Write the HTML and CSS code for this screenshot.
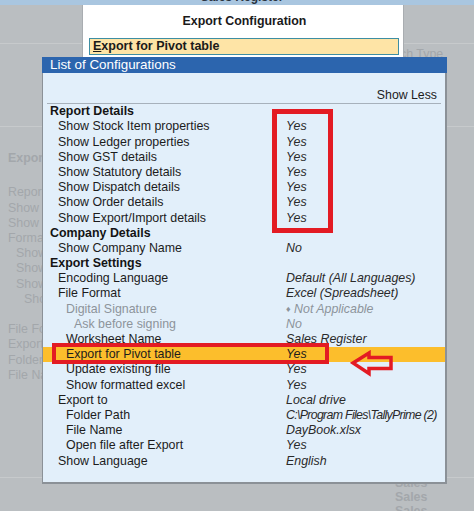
FILE: index.html
```html
<!DOCTYPE html>
<html>
<head>
<meta charset="utf-8">
<title>Export Configuration</title>
<link rel="stylesheet" href="styles.css">
</head>
<body>
<div class="screen">
  <div class="topstrip"><span class="topstrip-text">Sales Register</span></div>
  <div class="bg">
    <div class="bg-left">
      <div class="bg-line bold">Export Details</div>
      <div class="bg-line gap">Report Details</div>
      <div class="bg-line">Show Ledger</div>
      <div class="bg-line">Show Stock</div>
      <div class="bg-line">Format of Report</div>
      <div class="bg-line i1">Show Details</div>
      <div class="bg-line i1">Show Narration</div>
      <div class="bg-line i1">Show Entered</div>
      <div class="bg-line i2">Show Order</div>
      <div class="bg-line blank">&nbsp;</div>
      <div class="bg-line">File Format</div>
      <div class="bg-line">Export to</div>
      <div class="bg-line">Folder Path</div>
      <div class="bg-line">File Name</div>
    </div>
    <div class="bg-mid"></div>
    <div class="bg-right">
      <div class="bg-right-top">ch Type</div>
      <div class="bg-right-bottom">
        <div class="bg-line bold">Sales</div>
        <div class="bg-line bold">Sales</div>
        <div class="bg-line bold">Sales</div>
      </div>
    </div>
  </div>

  <div class="config-dialog">
    <div class="config-title">Export Configuration</div>
    <div class="config-field"><span class="key">E</span>xport for Pivot table</div>
  </div>

  <div class="list-dialog">
    <div class="list-title">List of Configurations</div>
    <div class="list-body">
      <div class="show-less">Show Less</div>
      <div class="rows">
        <div class="row head"><span class="label">Report Details</span></div>
        <div class="row l1"><span class="label">Show Stock Item properties</span><span class="value">Yes</span></div>
        <div class="row l1"><span class="label">Show Ledger properties</span><span class="value">Yes</span></div>
        <div class="row l1"><span class="label">Show GST details</span><span class="value">Yes</span></div>
        <div class="row l1"><span class="label">Show Statutory details</span><span class="value">Yes</span></div>
        <div class="row l1"><span class="label">Show Dispatch details</span><span class="value">Yes</span></div>
        <div class="row l1"><span class="label">Show Order details</span><span class="value">Yes</span></div>
        <div class="row l1"><span class="label">Show Export/Import details</span><span class="value">Yes</span></div>
        <div class="row head"><span class="label">Company Details</span></div>
        <div class="row l1"><span class="label">Show Company Name</span><span class="value">No</span></div>
        <div class="row head"><span class="label">Export Settings</span></div>
        <div class="row l1"><span class="label">Encoding Language</span><span class="value">Default (All Languages)</span></div>
        <div class="row l1"><span class="label">File Format</span><span class="value">Excel (Spreadsheet)</span></div>
        <div class="row l2 disabled"><span class="label">Digital Signature</span><span class="value"><span class="diamond">&#9830;</span> Not Applicable</span></div>
        <div class="row l3 disabled"><span class="label">Ask before signing</span><span class="value">No</span></div>
        <div class="row l2"><span class="label">Worksheet Name</span><span class="value">Sales Register</span></div>
        <div class="row l2 active"><span class="label">Export for Pivot table</span><span class="value">Yes</span></div>
        <div class="row l2"><span class="label">Update existing file</span><span class="value">Yes</span></div>
        <div class="row l2"><span class="label">Show formatted excel</span><span class="value">Yes</span></div>
        <div class="row l1"><span class="label">Export to</span><span class="value">Local drive</span></div>
        <div class="row l2"><span class="label">Folder Path</span><span class="value tight">C:\Program Files\TallyPrime (2)</span></div>
        <div class="row l2"><span class="label">File Name</span><span class="value">DayBook.xlsx</span></div>
        <div class="row l2"><span class="label">Open file after Export</span><span class="value">Yes</span></div>
        <div class="row l1"><span class="label">Show Language</span><span class="value">English</span></div>
      </div>
    </div>
  </div>

  <div class="mark mark-values"></div>
  <div class="mark mark-pivot"></div>
  <svg class="arrow" width="46" height="28" viewBox="0 0 46 28">
    <polygon points="3,13 19,3 19,7.5 41,7.5 41,18.5 19,18.5 19,23.5" fill="none" stroke="#e31b23" stroke-width="3.5" stroke-linejoin="miter"/>
  </svg>
</div>
</body>
</html>
```

FILE: styles.css
```css
* { box-sizing: border-box; }
html, body { margin: 0; padding: 0; }
body {
  font-family: "Liberation Sans", Arial, sans-serif;
  background: #babec1;
}
.screen {
  position: relative;
  width: 474px;
  height: 511px;
  overflow: hidden;
  background: #babec1;
}

/* top strip */
.topstrip {
  height: 5px;
  background: #a9c6e0;
  overflow: hidden;
  text-align: center;
}
.topstrip-text {
  display: block;
  margin-top: -10px;
  padding-left: 10px;
  font-weight: bold;
  font-size: 12px;
  line-height: 14px;
  color: #2a3440;
}

/* faded background screen */
.bg {
  display: grid;
  grid-template-columns: 42px 1fr 79px;
  height: 506px;
  background-image: linear-gradient(to bottom,
    transparent 38px, #c7cacc 38px, #c7cacc 39px, transparent 39px,
    transparent 121px, #c7cacc 121px, #c7cacc 122px, transparent 122px,
    transparent 472px, #c7cacc 472px, #c7cacc 473px, transparent 473px);
}
.bg-line {
  font-size: 12.4px;
  line-height: 15.2px;
  color: #a3a7ab;
  white-space: nowrap;
}
.bg-line.bold { font-weight: bold; }
.bg-left {
  overflow: hidden;
  padding-top: 146.4px;
  padding-left: 8px;
}
.bg-left .gap { margin-top: 18.8px; }
.bg-left .i1 { padding-left: 8px; }
.bg-left .i2 { padding-left: 16px; }
.bg-right {
  display: flex;
  flex-direction: column;
}
.bg-right-top {
  margin-top: 41.5px;
  padding-left: 5px;
  font-size: 12.4px;
  line-height: 15px;
  color: #a3a7ab;
  white-space: nowrap;
}
.bg-right-bottom {
  margin-top: auto;
  margin-bottom: -7px;
}
.bg-right-bottom .bg-line { line-height: 14px; }

/* Export Configuration dialog */
.config-dialog {
  position: absolute;
  left: 82px;
  top: 5px;
  width: 322px;
  height: 70px;
  background: #ffffff;
  border-left: 1px solid #a9adb1;
  border-right: 1px solid #a9adb1;
  padding: 8.5px 5px 0 6px;
}
.config-title {
  text-align: center;
  font-weight: bold;
  font-size: 12.4px;
  line-height: 15px;
  color: #1a1a1a;
  padding-left: 2px;
}
.config-field {
  margin-top: 9px;
  width: 310px;
  height: 17px;
  background: #fee4a6;
  border: 1px solid #3e8ea3;
  padding-left: 3px;
  font-weight: bold;
  font-size: 12.5px;
  line-height: 15px;
  color: #1a1a1a;
}
.config-field .key { text-decoration: underline; }

/* List of Configurations dialog */
.list-dialog {
  position: absolute;
  left: 42px;
  top: 57px;
  width: 405px;
  height: 427px;
  display: flex;
  flex-direction: column;
  border-left: 1px solid #8b9197;
  border-right: 2px solid #8b9197;
  border-bottom: 2px solid #8b9197;
  background: #e2effa;
}
.list-title {
  height: 16px;
  background: #2c65ae;
  color: #ffffff;
  font-size: 13.4px;
  line-height: 16px;
  padding-left: 8px;
  margin-left: -1px;
  margin-right: -2px;
}
.list-body {
  flex: 1;
  background: #e2effa;
}
.show-less {
  margin: 0 4px;
  padding-top: 15px;
  padding-right: 4px;
  text-align: right;
  font-size: 12.3px;
  line-height: 15.2px;
  color: #1c1c1c;
  border-bottom: 1px solid #a7b1bb;
}
.rows { display: flex; flex-direction: column; }
.row {
  display: grid;
  grid-template-columns: 243px 1fr;
  height: 15.2px;
  font-size: 12.4px;
  line-height: 15.2px;
  color: #1c1c1c;
  white-space: nowrap;
}
.row .value {
  font-style: italic;
  color: #2a2a2a;
}
.row .value.tight { letter-spacing: -0.7px; }
.row.head .label { font-weight: bold; padding-left: 7px; color: #141414; }
.row.l1 .label { padding-left: 15px; }
.row.l2 .label { padding-left: 23px; }
.row.l3 .label { padding-left: 31px; }
.row.disabled .label,
.row.disabled .value { color: #8d949b; }
.diamond {
  font-style: normal;
  font-size: 9px;
  vertical-align: 1px;
}
.row.active { background: #fcbe2c; }
.row.active .value { color: #1c1c1c; }

/* annotations */
.mark {
  position: absolute;
  border: 5px solid #e31b23;
}
.mark-values {
  left: 272px;
  top: 109px;
  width: 61px;
  height: 124px;
}
.mark-pivot {
  left: 52px;
  top: 343px;
  width: 277px;
  height: 21px;
  border-width: 4.5px;
}
.arrow {
  position: absolute;
  left: 350px;
  top: 350px;
}
```
